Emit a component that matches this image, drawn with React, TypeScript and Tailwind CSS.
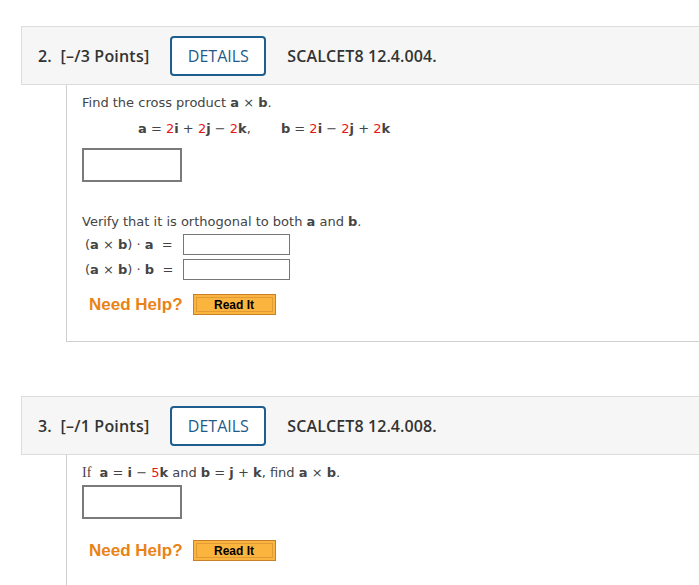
import React from "react";

const red = "text-[#e5161d]";

function Header({ num, points, code }: { num: string; points: string; code: string }) {
  return (
    <div className="ml-[21px] flex h-[59px] items-center border border-r-0 border-[#dcdcdc] bg-[#f6f6f6] pl-4 font-['Open_Sans',sans-serif] text-[16px] text-[#333]">
      <span className="font-semibold">{num}</span>
      <span className="ml-[9px] font-semibold tracking-[0.2px]">{points}</span>
      <button className="ml-[21px] flex h-[40px] w-[96px] items-center justify-center rounded-[4px] border-2 border-[#1e5e8f] bg-white text-[#1e5a8a]">
        DETAILS
      </button>
      <span className="ml-[21px] font-semibold tracking-[0.1px]">{code}</span>
    </div>
  );
}

function ReadIt() {
  return (
    <button className="flex h-[21px] w-[83px] items-center justify-center border border-[#c7802a] bg-[#fbb43d] p-[2px]">
      <span className="flex h-full w-full items-center justify-center border border-[#e29a35] font-['Liberation_Sans',sans-serif] text-[12px] font-bold text-black">
        Read It
      </span>
    </button>
  );
}

function Help({ className }: { className?: string }) {
  return (
    <div className={"flex items-center gap-[10px] pl-[7px] " + (className ?? "")}>
      <span className="font-['Liberation_Sans',sans-serif] text-[17px] font-bold text-[#ea8316]">Need Help?</span>
      <ReadIt />
    </div>
  );
}

export default function App() {
  return (
    <div className="min-h-[585px] bg-white pt-[26px] font-['DejaVu_Sans',sans-serif] text-[13px] text-[#444]">
      <Header num="2." points="[–/3 Points]" code="SCALCET8 12.4.004." />
      <div className="ml-[66px] h-[257px] border-b border-l border-[#cfcfcf] pl-[15px] pt-[9px]">
        <div className="leading-[18px]">
          Find the cross product <b>a</b> × <b>b</b>.
        </div>
        <div className="mt-[8px] pl-[56px] leading-[18px]">
          <b>a</b> = <span className={red}>2</span><b>i</b> + <span className={red}>2</span><b>j</b> − <span className={red}>2</span><b>k</b>,
          <span className="ml-[30px]">
            <b>b</b> = <span className={red}>2</span><b>i</b> − <span className={red}>2</span><b>j</b> + <span className={red}>2</span><b>k</b>
          </span>
        </div>
        <input className="mt-[10px] block h-[34px] w-[100px] border-2 border-[#7a7a7a] bg-white" />
        <div className="mt-[31px] leading-[18px]">
          Verify that it is orthogonal to both <b>a</b> and <b>b</b>.
        </div>
        <div className="mt-[3px] flex items-center">
          <span className="w-[101px] pl-[3px]">(<b>a</b> × <b>b</b>) · <b>a</b> &nbsp;=</span>
          <input className="h-[21px] w-[107px] border border-[#777] bg-white" />
        </div>
        <div className="mt-[4px] flex items-center">
          <span className="w-[101px] pl-[3px]">(<b>a</b> × <b>b</b>) · <b>b</b> &nbsp;=</span>
          <input className="h-[21px] w-[107px] border border-[#777] bg-white" />
        </div>
        <Help className="mt-[12px]" />
      </div>

      <div className="h-[54px]" />

      <Header num="3." points="[–/1 Points]" code="SCALCET8 12.4.008." />
      <div className="ml-[66px] h-[130px] border-l border-[#cfcfcf] pl-[15px] pt-[9px]">
        <div className="leading-[18px]">
          <span className="font-['Liberation_Serif',serif] text-[14px]">If</span>&nbsp;&nbsp;<b>a</b>&nbsp;=&nbsp;<b>i</b> − <span className={red}>5</span><b>k</b> and <b>b</b>&nbsp;=&nbsp;<b>j</b> + <b>k</b>, find <b>a</b> × <b>b</b>.
        </div>
        <input className="mt-[3px] block h-[34px] w-[100px] border-2 border-[#7a7a7a] bg-white" />
        <Help className="mt-[19px]" />
      </div>
    </div>
  );
}
